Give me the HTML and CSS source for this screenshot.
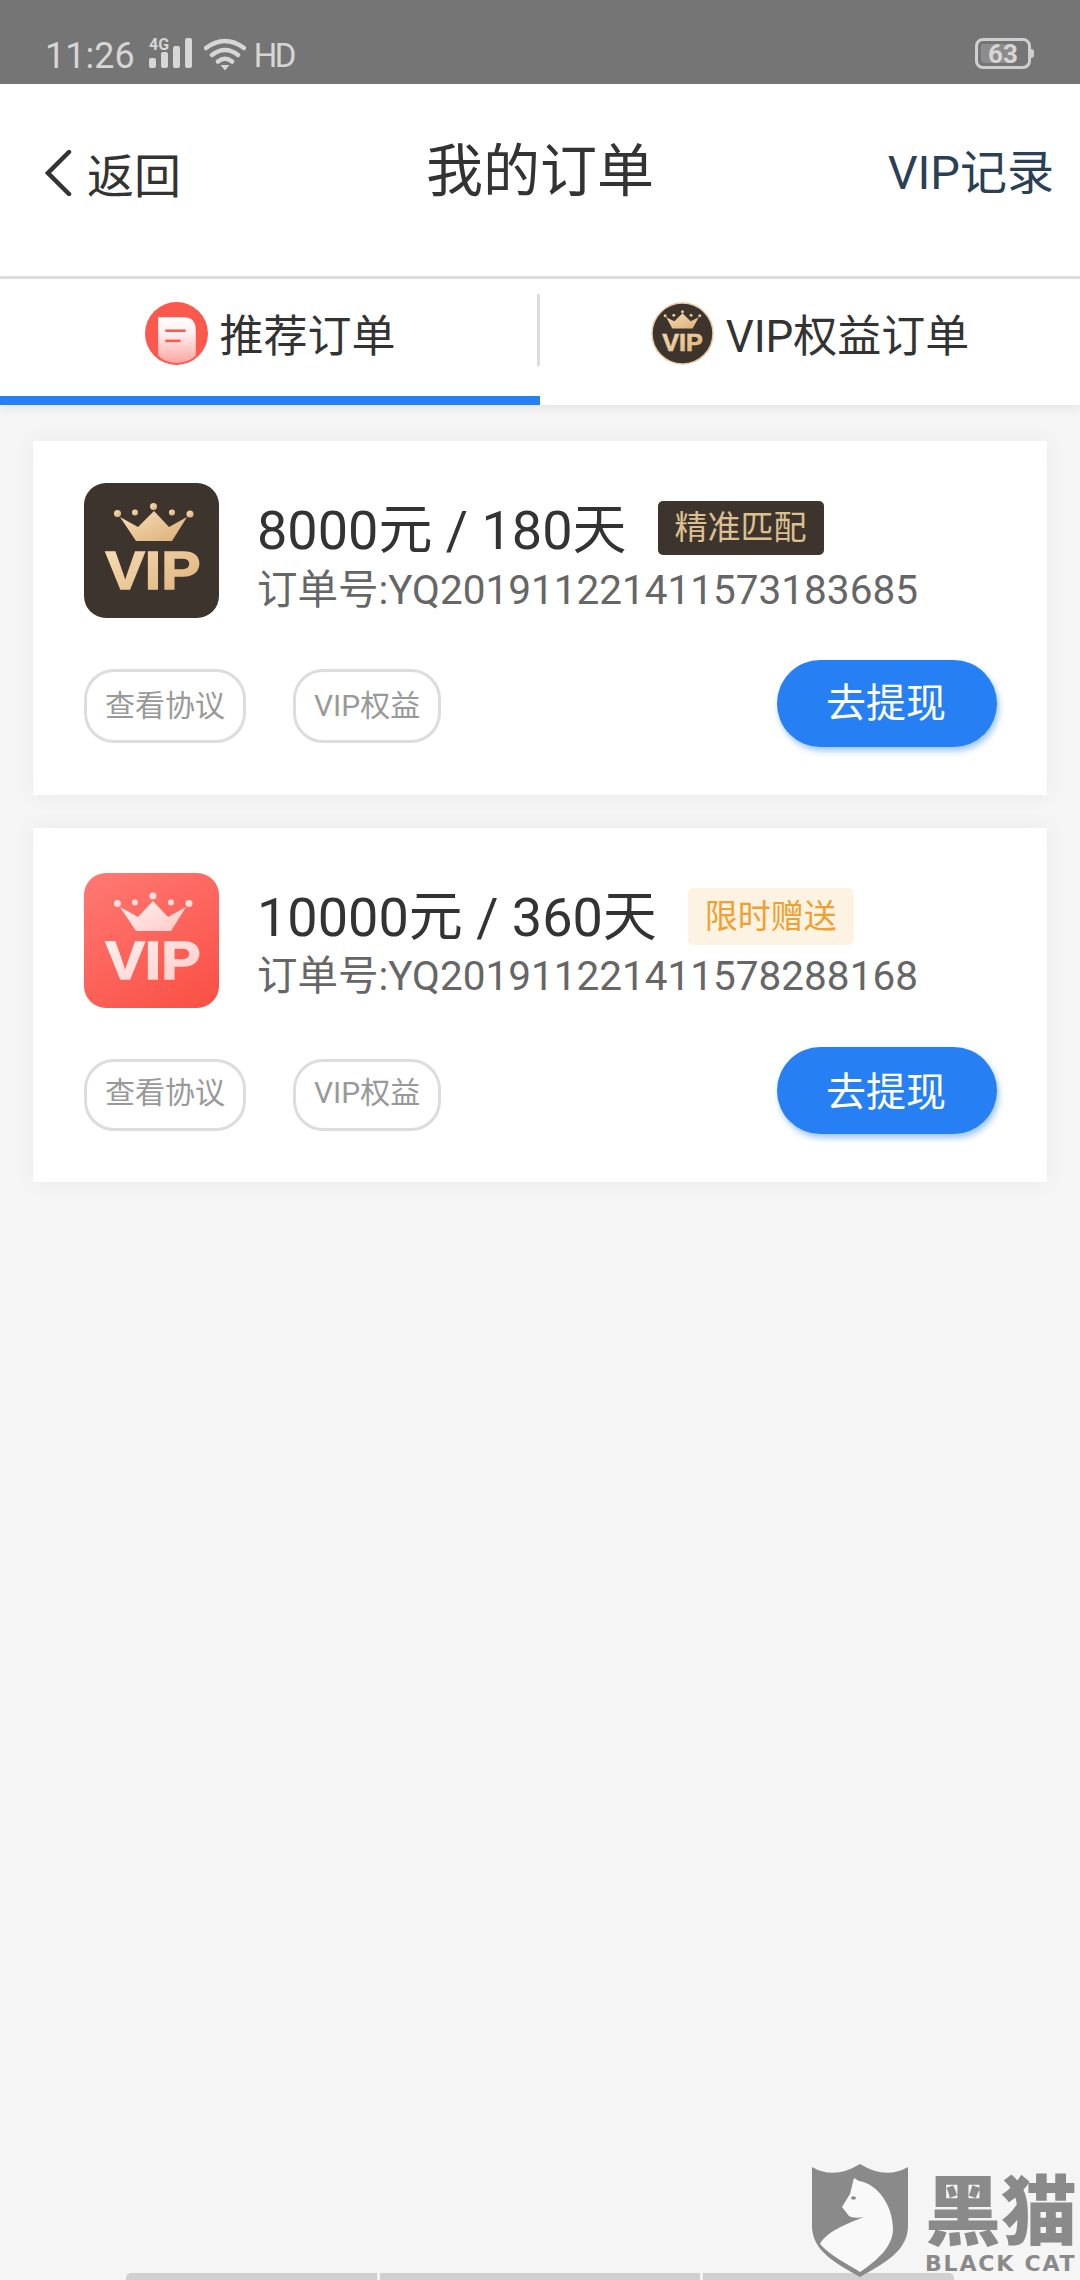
FILE: index.html
```html
<!DOCTYPE html>
<html lang="zh-CN">
  <head>
    <meta charset="utf-8" />
    <title>我的订单</title>
    <meta name="viewport" content="width=device-width,initial-scale=1" />
    <link rel="stylesheet" href="styles.css">
  </head>
  <body>
    <div class="screen">
      <!-- Status bar -->
      <div class="status">
        <span class="status__time">11:26</span>
        <svg class="status__signal" width="44" height="32" viewBox="0 0 44 32">
          <text x="0" y="12" class="status__net" textLength="20" lengthAdjust="spacingAndGlyphs">4G</text>
          <rect x="0" y="20" width="7" height="10" rx="2" />
          <rect x="12" y="14" width="7" height="16" rx="2" />
          <rect x="24" y="8" width="7" height="22" rx="2" />
          <rect x="36" y="0" width="7" height="30" rx="2" />
        </svg>
        <svg class="status__wifi" width="42" height="33" viewBox="0 0 42 33">
          <path d="M2 10 Q21 -4 40 10 M8 17 Q21 7 34 17 M14 23.500 Q21 18 28 23.500" />
          <polygon points="16.500,27 25.500,27 21,32.500" />
        </svg>
        <span class="status__hd">HD</span>
        <div class="battery">
          <div class="battery__fill"></div>
          <span class="battery__num">63</span>
        </div>
      </div>

      <!-- Nav bar -->
      <header class="nav">
        <a href="#" class="nav__back">
          <svg width="27" height="46" viewBox="0 0 27 46">
            <path d="M24 2 L3 23 L24 44" />
          </svg>
          <span>返回</span>
        </a>
        <h1 class="nav__title">我的订单</h1>
        <a href="#" class="nav__more">VIP记录</a>
      </header>

      <!-- Tabs -->
      <nav class="tabs">
        <a href="#" class="tabs__link tabs__link--active">
          <svg width="63" height="63" viewBox="0 0 62 62">
            <defs>
              <linearGradient id="doc" x1="0" y1="0" x2="0" y2="1">
                <stop offset="0" stop-color="#ffffff" />
                <stop offset="0.35" stop-color="#fff0ef" />
                <stop offset="1" stop-color="#fba5a0" />
              </linearGradient>
            </defs>
            <circle cx="31" cy="31" r="31" fill="#fb584e" />
            <path d="M13 15 H38 Q50 15 50 28 V53 Q42 60 31 60 Q20 60 13 53 Z" fill="url(#doc)" />
            <rect x="20" y="27" width="20" height="2.500" fill="#fb584e" />
            <rect x="20" y="37" width="15" height="2.500" fill="#fb584e" />
          </svg>
          <span>推荐订单</span>
        </a>
        <a href="#" class="tabs__link">
          <svg width="63" height="63" viewBox="0 0 62 62">
            <defs>
              <linearGradient id="goldSmall" x1="0" y1="0" x2="1" y2="1">
                <stop offset="0" stop-color="#f6dcb3" />
                <stop offset="1" stop-color="#dcb077" />
              </linearGradient>
            </defs>
            <circle cx="31" cy="31" r="30" fill="#3e342e" stroke="#e8c9a0" stroke-width="1.500" />
            <g fill="url(#goldSmall)">
              <polygon points="15,15 23,19 31,11 39,19 47,15 41,26 21,26" />
              <circle cx="14" cy="13.500" r="1.500" />
              <circle cx="22.500" cy="13" r="1.500" />
              <circle cx="31" cy="9.500" r="1.500" />
              <circle cx="39.500" cy="13" r="1.500" />
              <circle cx="48" cy="13.500" r="1.500" />
              <text x="31" y="48" text-anchor="middle" class="vip-text" font-size="24" textLength="40" lengthAdjust="spacingAndGlyphs" stroke="url(#goldSmall)" stroke-width="0.600">VIP</text>
            </g>
          </svg>
          <span>VIP权益订单</span>
        </a>
      </nav>

      <!-- Orders -->
      <main class="orders">
        <section class="order">
          <div class="order__top">
            <svg class="order__icon" width="135" height="135" viewBox="0 0 135 135">
              <defs>
                <linearGradient id="gold" x1="0" y1="0" x2="1" y2="1">
                  <stop offset="0" stop-color="#f8e0bb" />
                  <stop offset="1" stop-color="#dcae74" />
                </linearGradient>
              </defs>
              <rect width="135" height="135" rx="22" fill="#3e342e" />
              <g fill="url(#gold)">
                <polygon points="36,34 54,44 70,28 85,44 103,34 88,58 52,58" />
                <circle cx="33.500" cy="30.500" r="3.500" />
                <circle cx="51" cy="29.500" r="3" />
                <circle cx="69.500" cy="23.500" r="3.500" />
                <circle cx="88" cy="29.500" r="3" />
                <circle cx="106" cy="31" r="3.500" />
                <text x="69" y="106" text-anchor="middle" class="vip-text" font-size="54" textLength="95" lengthAdjust="spacingAndGlyphs" stroke="url(#gold)" stroke-width="1.500">VIP</text>
              </g>
            </svg>
            <div class="order__info">
              <div class="order__head">
                <span class="order__amount">8000元 / 180天</span>
                <span class="tag tag--dark">精准匹配</span>
              </div>
              <div class="order__no">订单号:YQ201911221411573183685</div>
            </div>
          </div>
          <div class="order__foot">
            <a href="#" class="pill">查看协议</a>
            <a href="#" class="pill">VIP权益</a>
            <a href="#" class="btn">去提现</a>
          </div>
        </section>

        <section class="order order--second">
          <div class="order__top">
            <svg class="order__icon" width="135" height="135" viewBox="0 0 135 135">
              <defs>
                <linearGradient id="red" x1="0.200" y1="0" x2="0.800" y2="1">
                  <stop offset="0" stop-color="#ff7670" />
                  <stop offset="1" stop-color="#fa5247" />
                </linearGradient>
                <linearGradient id="pale" x1="0" y1="0" x2="1" y2="1">
                  <stop offset="0" stop-color="#fff3f1" />
                  <stop offset="1" stop-color="#ffc9c6" />
                </linearGradient>
              </defs>
              <rect width="135" height="135" rx="22" fill="url(#red)" />
              <g fill="url(#pale)">
                <polygon points="36,34 54,44 69,28 84,44 102,34 87,58 52,58" />
                <circle cx="33.500" cy="30.500" r="3.500" />
                <circle cx="51" cy="29.500" r="3" />
                <circle cx="69" cy="23" r="3.500" />
                <circle cx="87" cy="29.500" r="3" />
                <circle cx="105" cy="30.500" r="3.500" />
                <text x="69" y="106" text-anchor="middle" class="vip-text" font-size="54" textLength="95" lengthAdjust="spacingAndGlyphs" stroke="url(#pale)" stroke-width="1.500">VIP</text>
              </g>
            </svg>
            <div class="order__info">
              <div class="order__head">
                <span class="order__amount">10000元 / 360天</span>
                <span class="tag tag--light">限时赠送</span>
              </div>
              <div class="order__no">订单号:YQ201911221411578288168</div>
            </div>
          </div>
          <div class="order__foot">
            <a href="#" class="pill">查看协议</a>
            <a href="#" class="pill">VIP权益</a>
            <a href="#" class="btn">去提现</a>
          </div>
        </section>
      </main>

      <!-- Bottom strip -->
      <div class="strip">
        <span class="strip__seg strip__seg--first"></span>
        <span class="strip__seg strip__seg--mid"></span>
        <span class="strip__seg strip__seg--last"></span>
      </div>

      <!-- Watermark over the page -->
      <div class="mark">
        <svg class="mark__shield" width="96" height="114" viewBox="0 0 96 114">
          <path d="M0 3 Q22 16 48 0 Q74 16 96 3 V62 C96 88 70 100 48 113 C26 100 0 88 0 62 Z" fill="#8a8a8a" />
          <path d="M42 14 L47 17 C66 20 81 42 81 65 C81 82 66 96 48 108 C36 100 18 92 8 80 C14 68 34 60 52 53 C46 54 40 54 37 52 L30 43 L38 30 Z" fill="#f9f9f9" />
          <ellipse cx="41.500" cy="34" rx="2.500" ry="1.800" fill="#8a8a8a" />
        </svg>
        <div class="mark__text">
          <div class="mark__cn">黑猫</div>
          <div class="mark__en">BLACK CAT</div>
        </div>
      </div>
    </div>
  </body>
</html>
```

FILE: styles.css
```css
/* Base */
html { box-sizing: border-box; }
*, *:before, *:after { box-sizing: inherit; }
body {
  margin: 0;
  background-color: #f5f5f5;
  color: #333;
  font-family: Roboto, "Noto Sans CJK SC", sans-serif;
}
a { color: inherit; text-decoration: none; }
.screen {
  position: relative;
  display: flex;
  flex-direction: column;
  height: 2280px;
  overflow: hidden;
}

/* Status bar */
.status {
  display: flex;
  align-items: flex-start;
  height: 84px;
  padding: 38px 49px 0 45px;
  background-color: #757575;
  color: #d6d6d6;
}
.status__time {
  font-size: 36px;
  line-height: 36px;
  white-space: nowrap;
}
.status__signal { margin-left: 14px; fill: #d6d6d6; }
.status__net {
  font-family: Roboto, sans-serif;
  font-size: 16px;
  font-weight: 700;
}
.status__wifi { margin-left: 11px; fill: #d6d6d6; }
.status__wifi path {
  fill: none;
  stroke: #d6d6d6;
  stroke-width: 4.500;
  stroke-linecap: round;
}
.status__hd {
  margin-left: 8px;
  font-size: 33px;
  line-height: 36px;
  letter-spacing: -2.500px;
}
.battery {
  position: relative;
  display: flex;
  align-items: center;
  justify-content: center;
  width: 56px;
  height: 31px;
  margin-left: auto;
  border: 3px solid #cfcfcf;
  border-radius: 8px;
}
/* battery nub */
.battery:after {
  content: "";
  position: absolute;
  right: -6px;
  top: 8px;
  width: 3px;
  height: 9px;
  background-color: #cfcfcf;
  border-radius: 0 3px 3px 0;
}
.battery__fill {
  position: absolute;
  left: 3px;
  top: 3px;
  bottom: 3px;
  width: 63%;
  background-color: #8c8c8c;
  border-radius: 3px;
}
.battery__num {
  position: relative;
  font-size: 26px;
  font-weight: 700;
  line-height: 1;
}

/* Nav bar */
.nav {
  display: flex;
  align-items: center;
  height: 195px;
  padding: 0 26px 16px 45px;
  background-color: #fff;
  border-bottom: 3px solid #e0e0e0;
}
.nav__back {
  display: flex;
  align-items: center;
  gap: 15px;
  width: 381px;
  font-size: 47px;
}
.nav__back svg {
  fill: none;
  stroke: #333;
  stroke-width: 4.500;
  stroke-linecap: round;
  margin-top: 2px;
}
.nav__title {
  margin: 0;
  font-size: 57px;
  font-weight: 400;
  line-height: 1.2;
}
.nav__more {
  margin-left: auto;
  margin-top: -8px;
  font-size: 47px;
  color: #2b3f55;
}

/* Tabs */
.tabs {
  display: flex;
  height: 126px;
  background-color: #fff;
  box-shadow: 0 3px 10px rgba(0, 0, 0, 0.07);
}
.tabs__link {
  position: relative;
  flex: 1;
  display: flex;
  align-items: center;
  justify-content: center;
  gap: 12px;
  padding-bottom: 18px;
  font-size: 44px;
}
.tabs__link--active { border-bottom: 9px solid #2780f3; padding-bottom: 9px; }
/* divider between the two tabs */
.tabs__link--active:after {
  content: "";
  position: absolute;
  right: 0;
  top: 15px;
  width: 3px;
  height: 72px;
  background-color: #ddd;
}

/* Orders */
.orders {
  flex: 1;
  display: flex;
  flex-direction: column;
  gap: 33px;
  padding: 36px 33px 0;
}
.order {
  height: 354px;
  padding: 42px 50px 48px 51px;
  background-color: #fff;
  box-shadow: 0 0 20px rgba(0, 0, 0, 0.05);
}
.order--second { padding-top: 45px; }
.order__top {
  display: flex;
  align-items: flex-start;
  gap: 38px;
  height: 135px;
}
.order__icon { flex: none; }
.order__info { margin-top: 18px; }
.order--second .order__info { margin-top: 15px; }
.order__head {
  display: flex;
  align-items: center;
  gap: 31px;
  height: 54px;
}
.order__amount {
  padding-top: 5px;
  font-size: 54px;
  line-height: 54px;
  color: #333;
}
.tag {
  height: 54px;
  padding: 0 17px;
  border-radius: 5px;
  font-size: 33px;
  line-height: 54px;
}
.tag--dark { background-color: #3e342e; color: #dcc08e; }
.tag--light {
  align-self: flex-start;
  height: 57px;
  line-height: 57px;
  background-color: #fdf3e3;
  color: #f0a030;
}
.order__no {
  margin-top: 11px;
  font-size: 40.500px;
  line-height: 48px;
  color: #666;
}
.order--second .order__no { margin-top: 10px; }
.order__foot {
  display: flex;
  align-items: flex-end;
  gap: 47px;
  margin-top: 42px;
}
.order--second .order__foot { margin-top: 39px; }
.pill {
  height: 74px;
  margin-bottom: 4px;
  padding: 0 18px;
  border: 3px solid #ddd;
  border-radius: 30px;
  font-size: 30px;
  line-height: 68px;
  color: #999;
}
.order--second .pill {
  height: 72px;
  margin-bottom: 3px;
  line-height: 62px;
}
.btn {
  width: 220px;
  height: 87px;
  margin-left: auto;
  padding-right: 2px;
  border-radius: 44px;
  background-color: #2780f3;
  box-shadow: 2px 4px 6px rgba(39, 128, 243, 0.45);
  color: #fff;
  font-size: 40px;
  line-height: 87px;
  text-align: center;
}
.order--second .btn { line-height: 91px; }

/* Bottom strip */
.strip {
  display: flex;
  gap: 3px;
  height: 7px;
  padding-left: 126px;
}
.strip__seg { background-color: #d0d0d0; }
.strip__seg--first { width: 251px; border-radius: 5px 0 0 0; }
.strip__seg--mid { width: 320px; }
.strip__seg--last { width: 251px; border-radius: 0 5px 0 0; }

/* Watermark */
.mark {
  position: absolute;
  right: 3px;
  bottom: 2px;
  display: flex;
  gap: 17px;
}
.mark__text {
  display: flex;
  flex-direction: column;
  width: 152px;
  padding-top: 9px;
  color: #8a8a8a;
}
.mark__cn {
  font-size: 76px;
  font-weight: 900;
  line-height: 80px;
  white-space: nowrap;
}
.mark__en {
  font-family: "DejaVu Sans", sans-serif;
  font-size: 22px;
  font-weight: 700;
  line-height: 22px;
  white-space: nowrap;
  letter-spacing: 1.800px;
}

/* Text inside the VIP badges */
.vip-text {
  font-family: "Liberation Sans", sans-serif;
  font-weight: 700;
}
```
